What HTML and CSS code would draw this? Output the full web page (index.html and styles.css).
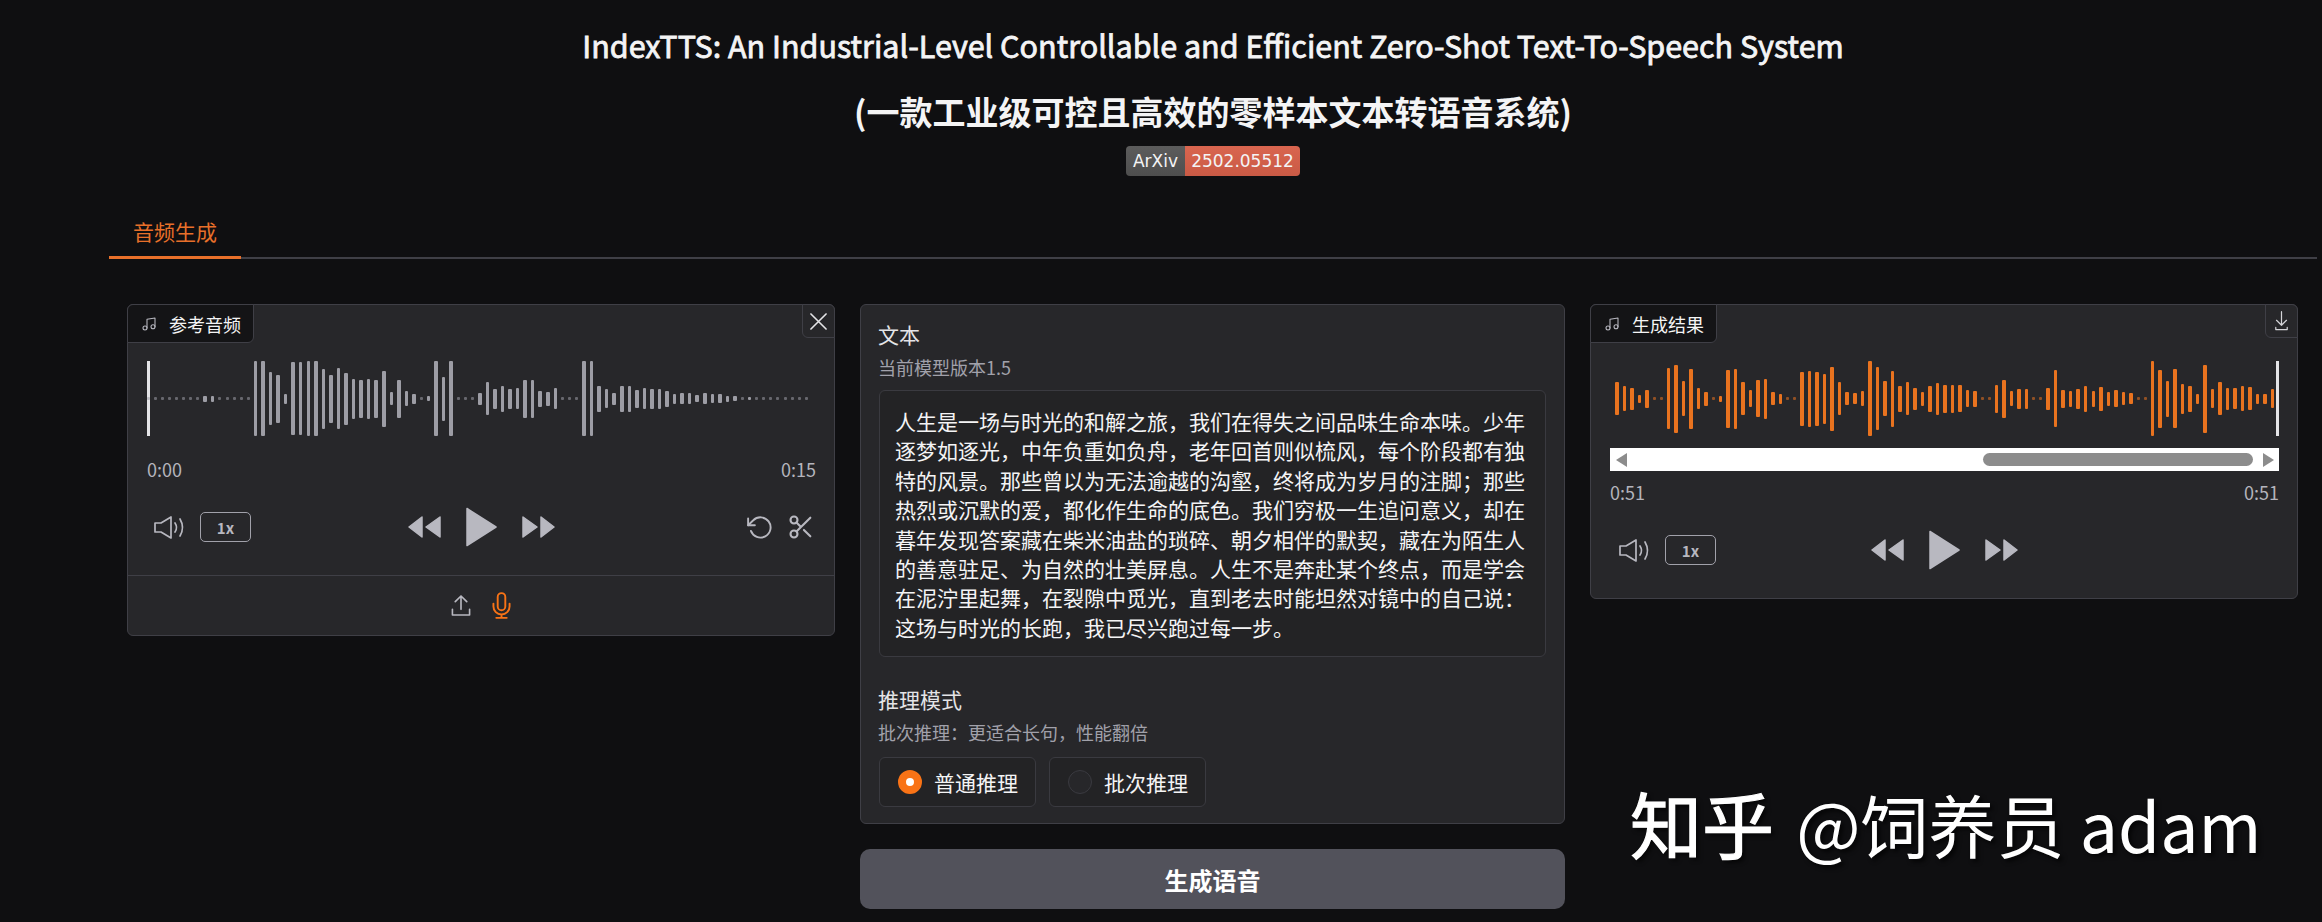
FILE: index.html
```html
<!DOCTYPE html>
<html lang="zh-CN">
<head>
  <meta charset="UTF-8">
  <meta name="viewport" content="width=device-width, initial-scale=1.0">
  <title>IndexTTS</title>
  <link rel="stylesheet" href="styles.css">
</head>
<body>
  <svg class="sprite" xmlns="http://www.w3.org/2000/svg">
    <symbol id="i-music" viewBox="0 0 24 24"><path d="M9 18V5l12-2v13"/><circle cx="6" cy="18" r="3"/><circle cx="18" cy="16" r="3"/></symbol>
    <symbol id="i-volume" viewBox="0 0 32 23"><path d="M1 7h6L17 1v21L7 16H1z"/><path d="M21 7q3 4.500 0 9"/><path d="M26 3q5 8.500 0 17"/></symbol>
    <symbol id="i-rewind" viewBox="0 0 33 22"><path d="M1 11 14 1v20zM18 11 32 1v20z"/></symbol>
    <symbol id="i-play" viewBox="0 0 31 40"><path d="M1 1.500 30 20 1 38.500z"/></symbol>
    <symbol id="i-forward" viewBox="0 0 33 22"><path d="M1 1l14 10L1 21zM19 1l13 10-13 10z"/></symbol>
    <symbol id="i-undo" viewBox="0 0 24 24"><path d="M1 4v6h6"/><path d="M3.500 15a9 9 0 1 0 2.100-9.400L1 10"/></symbol>
    <symbol id="i-cut" viewBox="0 0 24 24"><circle cx="6" cy="6" r="3"/><circle cx="6" cy="18" r="3"/><path d="M20 4 8.100 15.900M14.500 14.500 20 20M8.100 8.100 12 12"/></symbol>
    <symbol id="i-upload" viewBox="0 0 20 22"><path d="M10 15V1M4 7l6-6 6 6M1 15v6h18v-6"/></symbol>
    <symbol id="i-mic" viewBox="0 0 20 28"><rect x="6" y="1" width="8" height="18" rx="4"/><path d="M1.500 12v3a8.500 8.500 0 0 0 17 0v-3M10 23.500V27M4.500 27h11"/></symbol>
    <symbol id="i-download" viewBox="0 0 18 28"><path d="M9 1v19M2 13l7 7 7-7M1 23v3h16v-3"/></symbol>
    <symbol id="i-close" viewBox="0 0 18 18"><path d="M1 1l16 16M17 1 1 17"/></symbol>
  </svg>

  <div class="header">
    <h2 class="title">IndexTTS: An Industrial-Level Controllable and Efficient Zero-Shot Text-To-Speech System</h2>
    <h2 class="title title-cn">(一款工业级可控且高效的零样本文本转语音系统)</h2>
    <div class="badge"><span class="badge-name">ArXiv</span><span class="badge-value">2502.05512</span></div>
  </div>

  <div class="tabs">
    <button class="tab">音频生成</button>
  </div>

  <div class="columns">
    <!-- 参考音频 -->
    <div class="panel player">
      <div class="panel-label"><svg class="icon icon-note"><use href="#i-music"/></svg>参考音频</div>
      <button class="corner-btn"><svg class="icon icon-close"><use href="#i-close"/></svg></button>
      <div class="wave wave-ref" id="wave-ref"><div class="cursor"></div></div>
      <div class="times times-ref"><span>0:00</span><span>0:15</span></div>
      <div class="controls">
        <div class="controls-left">
          <svg class="icon icon-volume"><use href="#i-volume"/></svg>
          <button class="speed">1x</button>
        </div>
        <div class="controls-mid">
          <svg class="solid icon-skip"><use href="#i-rewind"/></svg>
          <svg class="solid icon-play"><use href="#i-play"/></svg>
          <svg class="solid icon-skip"><use href="#i-forward"/></svg>
        </div>
        <div class="controls-right">
          <svg class="icon icon-undo"><use href="#i-undo"/></svg>
          <svg class="icon icon-cut"><use href="#i-cut"/></svg>
        </div>
      </div>
      <div class="source-bar">
        <svg class="icon icon-upload"><use href="#i-upload"/></svg>
        <svg class="icon icon-mic"><use href="#i-mic"/></svg>
      </div>
    </div>

    <!-- 文本和推理模式 -->
    <div class="middle">
      <div class="panel form">
        <div class="field-title">文本</div>
        <div class="field-info">当前模型版本1.5</div>
        <textarea class="text-input" rows="8" readonly>人生是一场与时光的和解之旅，我们在得失之间品味生命本味。少年逐梦如逐光，中年负重如负舟，老年回首则似梳风，每个阶段都有独特的风景。那些曾以为无法逾越的沟壑，终将成为岁月的注脚；那些热烈或沉默的爱，都化作生命的底色。我们穷极一生追问意义，却在暮年发现答案藏在柴米油盐的琐碎、朝夕相伴的默契，藏在为陌生人的善意驻足、为自然的壮美屏息。人生不是奔赴某个终点，而是学会在泥泞里起舞，在裂隙中觅光，直到老去时能坦然对镜中的自己说：这场与时光的长跑，我已尽兴跑过每一步。</textarea>
        <div class="field-title field-mode">推理模式</div>
        <div class="field-info">批次推理：更适合长句，性能翻倍</div>
        <div class="radios">
          <label class="radio"><span class="dot dot-on"></span>普通推理</label>
          <label class="radio"><span class="dot"></span>批次推理</label>
        </div>
      </div>
      <button class="generate">生成语音</button>
    </div>

    <!-- 生成结果 -->
    <div class="panel player">
      <div class="panel-label"><svg class="icon icon-note"><use href="#i-music"/></svg>生成结果</div>
      <button class="corner-btn"><svg class="icon icon-download"><use href="#i-download"/></svg></button>
      <div class="wave wave-out" id="wave-out"><div class="cursor"></div></div>
      <div class="scrollbar">
        <span class="arrow arrow-left"></span>
        <span class="thumb"></span>
        <span class="arrow arrow-right"></span>
      </div>
      <div class="times times-out"><span>0:51</span><span>0:51</span></div>
      <div class="controls controls-out">
        <div class="controls-left">
          <svg class="icon icon-volume"><use href="#i-volume"/></svg>
          <button class="speed">1x</button>
        </div>
        <div class="controls-mid">
          <svg class="solid icon-skip"><use href="#i-rewind"/></svg>
          <svg class="solid icon-play"><use href="#i-play"/></svg>
          <svg class="solid icon-skip"><use href="#i-forward"/></svg>
        </div>
        <div class="controls-right"></div>
      </div>
    </div>
  </div>

  <div class="watermark"><b>知乎</b> @饲养员 adam</div>

  <script src="script.js"></script>
</body>
</html>
```

FILE: styles.css
```css
* {
  box-sizing: border-box;
}
body {
  margin: 0;
  height: 922px;
  overflow: hidden;
  position: relative;
  background-color: #0f0f11;
  color: #f4f4f5;
  font-family: "Noto Sans CJK SC", "Noto Sans", sans-serif;
}
button {
  font-family: inherit;
  padding: 0;
  background: none;
  border: none;
  color: inherit;
}
.sprite {
  display: none;
}
.icon {
  display: block;
  fill: none;
  stroke: #b8b8c0;
  stroke-width: 1.7;
  stroke-linecap: round;
  stroke-linejoin: round;
  overflow: visible;
}
.solid {
  display: block;
  fill: #b8b8c0;
  stroke: #b8b8c0;
  stroke-width: 1.5;
  stroke-linejoin: round;
}

/* header */
.header {
  height: 178px;
  padding: 22px 0 0 104px;
}
.title {
  margin: 0;
  text-align: center;
  font-size: 30.5px;
  line-height: 46px;
  font-weight: 400;
  -webkit-text-stroke: 0.8px #f4f4f5;
}
.title-cn {
  margin-top: 20px;
  font-size: 33px;
  font-weight: 700;
  -webkit-text-stroke: 0;
}
.badge {
  display: flex;
  width: 174px;
  height: 30px;
  margin: 12px auto 0;
  border-radius: 4px;
  overflow: hidden;
  font-family: "DejaVu Sans", sans-serif;
  font-size: 17px;
  line-height: 30px;
  text-align: center;
  color: #f4f4f5;
}
.badge-name {
  width: 59px;
  background: linear-gradient(#5c5c5c, #4e4e4e);
}
.badge-value {
  flex: 1;
  background: linear-gradient(#d9654f, #c95a45);
}

/* tabs */
.tabs {
  display: flex;
  height: 81px;
  margin: 0 5px 0 109px;
  border-bottom: 2px solid #3f3f46;
}
.tab {
  width: 132px;
  height: 81px;
  padding-top: 28px;
  color: #e8702a;
  font-size: 21px;
  border-bottom: 3px solid #e8702a;
}

/* layout */
.columns {
  display: flex;
  align-items: flex-start;
  gap: 25px;
  margin: 45px 24px 0 127px;
}
.panel {
  position: relative;
  background-color: #27272a;
  border: 1px solid #3f3f46;
  border-radius: 6px;
}
.player {
  width: 708px;
  padding: 56px 18px 0 19px;
}
.middle {
  width: 705px;
  flex-shrink: 0;
}
.panel-label {
  position: absolute;
  top: -1px;
  left: -1px;
  display: flex;
  align-items: center;
  gap: 12px;
  height: 39px;
  padding: 0 12px 0 13px;
  background-color: #141416;
  border: 1px solid #3f3f46;
  border-radius: 6px 0 6px 0;
  font-size: 18px;
}
.icon-note {
  width: 16px;
  height: 16px;
  stroke-width: 1.6;
}
.corner-btn {
  position: absolute;
  top: -1px;
  right: -1px;
  width: 33px;
  height: 34px;
  display: flex;
  align-items: center;
  justify-content: center;
  background-color: #27272a;
  border: 1px solid #3f3f46;
  border-radius: 0 6px 0 6px;
}
.icon-close {
  width: 17px;
  height: 17px;
  stroke: #e4e4e7;
}
.icon-download {
  width: 17px;
  height: 20px;
  stroke: #d4d4d8;
}

/* waveform */
.wave {
  position: relative;
  display: flex;
  align-items: center;
  justify-content: space-between;
  height: 75px;
}
.wave-ref {
  padding-right: 8px;
}
.wave-out {
  padding-left: 5px;
  padding-right: 4px;
}
.bar {
  width: 3.5px;
  border-radius: 1px;
  background-color: #9d9da5;
}
.wave-out .bar {
  background-color: #e9731f;
}
.bar-quiet {
  width: 3px;
  opacity: 0.55;
}
.cursor {
  position: absolute;
  top: 0;
  bottom: 0;
  width: 3px;
  background-color: #e4e4e7;
}
.wave-ref .cursor {
  left: 0;
}
.wave-out .cursor {
  right: 0;
}
.scrollbar {
  display: flex;
  align-items: center;
  height: 23px;
  margin-top: 12px;
  padding: 0 5px 0 6px;
  background-color: #fff;
}
.arrow {
  width: 0;
  height: 0;
  border-top: 7px solid transparent;
  border-bottom: 7px solid transparent;
}
.arrow-left {
  margin-right: auto;
  border-right: 11px solid #8c8c8c;
}
.arrow-right {
  margin-left: 10px;
  border-left: 11px solid #8c8c8c;
}
.thumb {
  width: 270px;
  height: 13px;
  border-radius: 7px;
  background-color: #8c8c8c;
}

/* player controls */
.times {
  display: flex;
  justify-content: space-between;
  height: 26px;
  font-size: 18px;
  line-height: 26px;
  color: #b4b4bc;
}
.times-ref {
  margin-top: 20px;
}
.times-out {
  margin-top: 8px;
}
.controls {
  display: grid;
  grid-template-columns: 1fr auto 1fr;
  align-items: center;
  height: 40px;
  margin-top: 25px;
}
.controls-out {
  margin-bottom: 28px;
}
.controls-left {
  display: flex;
  align-items: center;
  gap: 14px;
  padding-left: 7px;
}
.controls-out .controls-left {
  padding-left: 9px;
}
.icon-volume {
  width: 32px;
  height: 23px;
}
.speed {
  width: 51px;
  height: 30px;
  border: 1px solid #a1a1aa;
  border-radius: 5px;
  font-size: 15px;
  font-weight: 700;
  color: #b8b8c0;
}
.controls-mid {
  display: flex;
  align-items: center;
  gap: 25px;
}
.icon-skip {
  width: 33px;
  height: 22px;
}
.icon-play {
  width: 31px;
  height: 40px;
}
.controls-right {
  display: flex;
  justify-content: flex-end;
  align-items: center;
  gap: 13px;
  padding-right: 1px;
}
.icon-undo {
  width: 27px;
  height: 27px;
}
.icon-cut {
  width: 28px;
  height: 28px;
  stroke-width: 1.8;
}
.source-bar {
  display: flex;
  justify-content: center;
  align-items: center;
  gap: 21px;
  height: 60px;
  margin: 28px -18px 0 -19px;
  border-top: 1px solid #3f3f46;
}
.icon-upload {
  width: 20px;
  height: 21px;
}
.icon-mic {
  width: 19px;
  height: 27px;
  stroke: #f97316;
  stroke-width: 2;
}

/* form */
.form {
  height: 520px;
  padding: 14px 18px 0 17px;
}
.field-title {
  font-size: 21px;
  line-height: 30px;
  color: #e4e4e7;
}
.field-info {
  margin-top: 5px;
  font-size: 18px;
  line-height: 26px;
  color: #a1a1aa;
}
.field-mode {
  margin-top: 27px;
}
.text-input {
  display: block;
  width: 667px;
  height: 267px;
  margin: 10px 0 0 1px;
  padding: 16px 15px;
  resize: none;
  overflow: hidden;
  background-color: #232325;
  border: 1px solid #3a3a40;
  border-radius: 6px;
  outline: none;
  color: #f4f4f5;
  font-family: inherit;
  font-size: 21px;
  line-height: 29.4px;
}
.radios {
  display: flex;
  gap: 13px;
  margin: 12px 0 0 1px;
}
.radio {
  display: flex;
  align-items: center;
  gap: 12px;
  width: 157px;
  height: 50px;
  padding-left: 18px;
  background-color: #232325;
  border: 1px solid #3a3a40;
  border-radius: 6px;
  font-size: 21px;
}
.dot {
  width: 24px;
  height: 24px;
  border-radius: 50%;
  background-color: #27272a;
  border: 1px solid #3a3a40;
}
.dot-on {
  background-color: #fff;
  border: 8px solid #f97316;
}
.generate {
  display: block;
  width: 100%;
  height: 60px;
  margin-top: 25px;
  background-color: #52525b;
  border-radius: 10px;
  color: #fff;
  font-size: 24px;
  font-weight: 700;
}

/* 水印 */
.watermark {
  position: absolute;
  top: 773px;
  left: 1630px;
  font-size: 68px;
  line-height: 98px;
  color: #fff;
  white-space: nowrap;
  text-shadow: 3px 3px 4px rgba(0, 0, 0, 0.7);
}
.watermark b {
  margin-right: 7px;
  font-size: 72px;
  font-weight: 400;
  -webkit-text-stroke: 1.2px #fff;
}
```

FILE: script.js
```js
// 波形数据，单位 px，0 表示静音的小点
const refBars = [
  0, 0, 0, 0, 0, 0, 0, 0, 6, 6, 0, 0, 0, 0, 0, 75, 75, 53, 48, 10, 73, 73, 75, 75, 60, 48, 61, 52, 40, 38, 40, 38, 56,
  13, 38, 15, 10, 0, 5, 75, 44, 75, 0, 0, 0, 12, 33, 20, 26, 20, 21, 38, 38, 16, 14, 21, 0, 0, 0, 75, 75, 26, 19, 12,
  26, 26, 18, 21, 20, 20, 16, 10, 11, 11, 7, 11, 9, 9, 6, 5, 0, 3, 0, 0, 0, 0, 0, 0, 0, 0
];
const outBars = [
  33, 25, 22, 8, 18, 0, 0, 61, 68, 35, 60, 21, 14, 0, 6, 58, 60, 33, 17, 37, 40, 13, 10, 0, 0, 54, 56, 54, 50, 64, 33,
  13, 11, 15, 75, 63, 35, 56, 26, 33, 22, 14, 26, 32, 28, 28, 27, 17, 16, 0, 0, 28, 38, 15, 20, 20, 0, 0, 22, 57, 18,
  16, 20, 26, 16, 24, 14, 17, 13, 11, 0, 0, 75, 58, 36, 59, 30, 26, 10, 68, 19, 33, 22, 21, 25, 23, 10, 10, 19
];

function drawBars(id, bars) {
  const wave = document.getElementById(id);
  bars.forEach(h => {
    const bar = document.createElement('div');
    bar.className = h ? 'bar' : 'bar bar-quiet';
    bar.style.height = (h || 3) + 'px';
    wave.appendChild(bar);
  });
}

drawBars('wave-ref', refBars);
drawBars('wave-out', outBars);
```
